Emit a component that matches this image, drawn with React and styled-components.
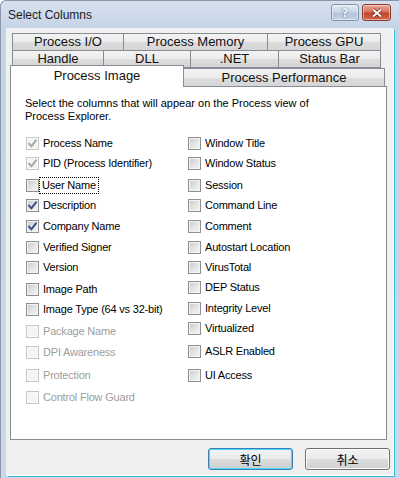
import React from 'react';
import styled, { createGlobalStyle } from 'styled-components';

const GlobalStyle = createGlobalStyle`
  body {
    margin: 0;
    overflow: hidden;
    background: #ffffff;
  }
`;

const Window = styled.div`
  width: 399px;
  height: 478px;
  box-sizing: border-box;
  display: flex;
  flex-direction: column;
  background: linear-gradient(180deg, #d6e0ee 0%, #c4d3e6 30px, #cbd8ea 100%);
  border-left: 1px solid #8a97aa;
  border-top: 1px solid #8a97aa;
  border-top-left-radius: 6px;
  font-family: 'Liberation Sans', Arial, sans-serif;
  color: #000;
`;

const TitleBar = styled.div`
  height: 27px;
  display: flex;
  align-items: flex-start;
  justify-content: space-between;
  flex-shrink: 0;
`;

const TitleText = styled.div`
  font-size: 12px;
  line-height: 14px;
  margin: 7px 0 0 7px;
  color: #1b1b1b;
`;

const CaptionButtons = styled.div`
  display: flex;
  gap: 3px;
  margin: 3px 8px 0 0;
`;

const CaptionButton = styled.div`
  width: ${(p) => p.$w}px;
  height: 17px;
  box-sizing: border-box;
  border: 1px solid ${(p) => (p.$close ? '#8b3a2c' : '#8292a8')};
  border-radius: 3px;
  display: flex;
  align-items: center;
  justify-content: center;
  background: ${(p) =>
    p.$close
      ? 'linear-gradient(180deg, #e9a99a 0%, #d7735e 45%, #c2432b 55%, #d46a4f 100%)'
      : 'linear-gradient(180deg, #e2eaf4 0%, #c9d6e7 45%, #b3c5dc 55%, #c3d3e7 100%)'};
  box-shadow: inset 0 0 0 1px rgba(255, 255, 255, 0.45);
`;

const HelpGlyph = styled.span`
  font-family: 'DejaVu Sans', sans-serif;
  font-weight: bold;
  font-size: 12px;
  line-height: 12px;
  color: #f4f7fb;
  text-shadow: 0 0 1px #54627a, 0 0 1px #54627a;
`;

const Client = styled.div`
  flex: 1;
  margin: 0 6px 3px 5px;
  background: #f0f0f0;
  box-sizing: border-box;
  padding: 5px 0 0 4px;
  display: flex;
  flex-direction: column;
  box-shadow: 1px 1px 0 0 #ffffff, 2px 2px 0 0 #3db6d6;
`;

const TabRow = styled.div`
  display: flex;
  align-items: flex-end;
  height: ${(p) => p.$h}px;
  margin-top: ${(p) => p.$mt || 0}px;
  margin-left: ${(p) => p.$ml || 0}px;
`;

const Tab = styled.div`
  width: ${(p) => p.$w}px;
  height: ${(p) => p.$h}px;
  box-sizing: border-box;
  border: 1px solid #898c95;
  border-bottom: ${(p) => (p.$open ? 'none' : '1px solid #898c95')};
  margin-left: ${(p) => (p.$first ? 0 : -1)}px;
  background: ${(p) =>
    p.$selected
      ? '#ffffff'
      : 'linear-gradient(180deg, #f3f3f3 0%, #ebebeb 50%, #dddddd 51%, #d5d5d5 100%)'};
  font-size: 13px;
  line-height: ${(p) => p.$lh}px;
  text-align: center;
  white-space: nowrap;
  color: #111;
  position: relative;
  z-index: ${(p) => (p.$selected ? 2 : 1)};
`;

const Panel = styled.div`
  width: 377px;
  height: 354px;
  box-sizing: border-box;
  margin-top: -1px;
  border: 1px solid #898c95;
  background: #ffffff;
  padding: 10px 0 0 14px;
  position: relative;
  z-index: 1;
`;

const Description = styled.div`
  font-size: 11px;
  line-height: 13px;
  width: 320px;
`;

const Columns = styled.div`
  display: grid;
  grid-template-columns: 162px auto;
  margin-top: 10px;
`;

const Column = styled.div`
  display: flex;
  flex-direction: column;
`;

const Row = styled.div`
  height: ${(p) => p.$h}px;
  display: flex;
  align-items: flex-start;
`;

const RowInner = styled.div`
  height: 20px;
  display: flex;
  align-items: center;
  padding-left: 1px;
`;

const Box = styled.div`
  width: 13px;
  height: 13px;
  box-sizing: border-box;
  flex-shrink: 0;
  border: 1px solid ${(p) => (p.$disabled ? '#c6c6c6' : '#8e8f8f')};
  background: ${(p) =>
    p.$disabled
      ? '#f4f4f4'
      : 'linear-gradient(135deg, #c9c9c9 0%, #e3e3e3 50%, #f6f6f6 100%)'};
  box-shadow: inset 0 0 0 1px ${(p) => (p.$disabled ? '#fbfbfb' : '#f3f3f3')};
  display: flex;
  align-items: center;
  justify-content: center;
`;

const Label = styled.span`
  font-size: 11px;
  letter-spacing: -0.2px;
  line-height: 13px;
  margin-left: ${(p) => (p.$focus ? 2 : 4)}px;
  padding: ${(p) => (p.$focus ? '0 1px' : '0')};
  outline: ${(p) => (p.$focus ? '1px dotted #000' : 'none')};
  outline-offset: 1px;
  color: ${(p) => (p.$disabled ? '#9d9d9d' : '#000')};
  white-space: nowrap;
`;

const ButtonBar = styled.div`
  display: flex;
  justify-content: flex-end;
  gap: 12px;
  padding: 8px 3px 0 0;
`;

const Button = styled.div`
  width: 85px;
  height: 22px;
  box-sizing: border-box;
  border: 1px solid ${(p) => (p.$default ? '#3c7fb1' : '#707070')};
  border-radius: 3px;
  background: linear-gradient(180deg, #f2f2f2 0%, #ebebeb 50%, #dddddd 51%, #cfcfcf 100%);
  box-shadow: inset 0 0 0 1px ${(p) => (p.$default ? '#48d8fb' : '#fcfcfc')};
  display: flex;
  align-items: center;
  justify-content: center;
  font-family: 'Noto Sans CJK KR', 'Liberation Sans', sans-serif;
  font-size: 12px;
`;

const CheckMark = ({ color }) => (
  <svg width="9" height="9" viewBox="0 0 9 9">
    <path
      d="M1 4.6 L3.4 7.2 L8 1.4"
      fill="none"
      stroke={color}
      strokeWidth="1.9"
      strokeLinecap="square"
    />
  </svg>
);

const CloseGlyph = () => (
  <svg width="12" height="10" viewBox="0 0 12 10">
    <path d="M2 1.5 L10 8.5 M10 1.5 L2 8.5" stroke="#5b1a10" strokeWidth="3.4" />
    <path d="M2 1.5 L10 8.5 M10 1.5 L2 8.5" stroke="#ffffff" strokeWidth="2" />
  </svg>
);

const left = [
  { label: 'Process Name', checked: true, boxDisabled: true, h: 20 },
  { label: 'PID (Process Identifier)', checked: true, boxDisabled: true, h: 22 },
  { label: 'User Name', focus: true, h: 20 },
  { label: 'Description', checked: true, h: 21 },
  { label: 'Company Name', checked: true, h: 21 },
  { label: 'Verified Signer', h: 20 },
  { label: 'Version', h: 22 },
  { label: 'Image Path', h: 20 },
  { label: 'Image Type (64 vs 32-bit)', h: 22 },
  { label: 'Package Name', disabled: true, h: 21 },
  { label: 'DPI Awareness', disabled: true, h: 23 },
  { label: 'Protection', disabled: true, h: 22 },
  { label: 'Control Flow Guard', disabled: true, h: 20 },
];

const right = [
  { label: 'Window Title', h: 20 },
  { label: 'Window Status', h: 22 },
  { label: 'Session', h: 20 },
  { label: 'Command Line', h: 21 },
  { label: 'Comment', h: 21 },
  { label: 'Autostart Location', h: 20 },
  { label: 'VirusTotal', h: 20 },
  { label: 'DEP Status', h: 21 },
  { label: 'Integrity Level', h: 20 },
  { label: 'Virtualized', h: 23 },
  { label: 'ASLR Enabled', h: 24 },
  { label: 'UI Access', h: 20 },
];

const CheckItem = ({ label, checked, disabled, boxDisabled, focus, h }) => {
  const dim = disabled || boxDisabled;
  return (
    <Row $h={h}>
      <RowInner>
        <Box $disabled={dim}>
          {checked ? <CheckMark color={dim ? '#a8a8a8' : '#3a4d8f'} /> : null}
        </Box>
        <Label $disabled={disabled} $focus={focus}>
          {label}
        </Label>
      </RowInner>
    </Row>
  );
};

const App = () => {
  return (
    <>
      <GlobalStyle />
      <Window>
        <TitleBar>
          <TitleText>Select Columns</TitleText>
          <CaptionButtons>
            <CaptionButton $w={28}>
              <HelpGlyph>?</HelpGlyph>
            </CaptionButton>
            <CaptionButton $w={29} $close>
              <CloseGlyph />
            </CaptionButton>
          </CaptionButtons>
        </TitleBar>
        <Client>
          <TabRow $h={18} $ml={2}>
            <Tab $first $w={112} $h={18} $lh={16}>Process I/O</Tab>
            <Tab $w={145} $h={18} $lh={16}>Process Memory</Tab>
            <Tab $w={114} $h={18} $lh={16}>Process GPU</Tab>
          </TabRow>
          <TabRow $h={18} $ml={2} $mt={-1}>
            <Tab $first $w={92} $h={18} $lh={16}>Handle</Tab>
            <Tab $w={88} $h={18} $lh={16}>DLL</Tab>
            <Tab $w={89} $h={18} $lh={16}>.NET</Tab>
            <Tab $w={103} $h={18} $lh={16}>Status Bar</Tab>
          </TabRow>
          <TabRow $h={22} $mt={-3}>
            <Tab $first $selected $open $w={174} $h={22} $lh={19}>
              Process Image
            </Tab>
            <Tab $w={202} $h={19} $lh={18} $open>
              Process Performance
            </Tab>
          </TabRow>
          <Panel>
            <Description>
              Select the columns that will appear on the Process view of Process Explorer.
            </Description>
            <Columns>
              <Column>
                {left.map((item) => (
                  <CheckItem key={item.label} {...item} />
                ))}
              </Column>
              <Column>
                {right.map((item) => (
                  <CheckItem key={item.label} {...item} />
                ))}
              </Column>
            </Columns>
          </Panel>
          <ButtonBar>
            <Button $default>확인</Button>
            <Button>취소</Button>
          </ButtonBar>
        </Client>
      </Window>
    </>
  );
};

export default App;
